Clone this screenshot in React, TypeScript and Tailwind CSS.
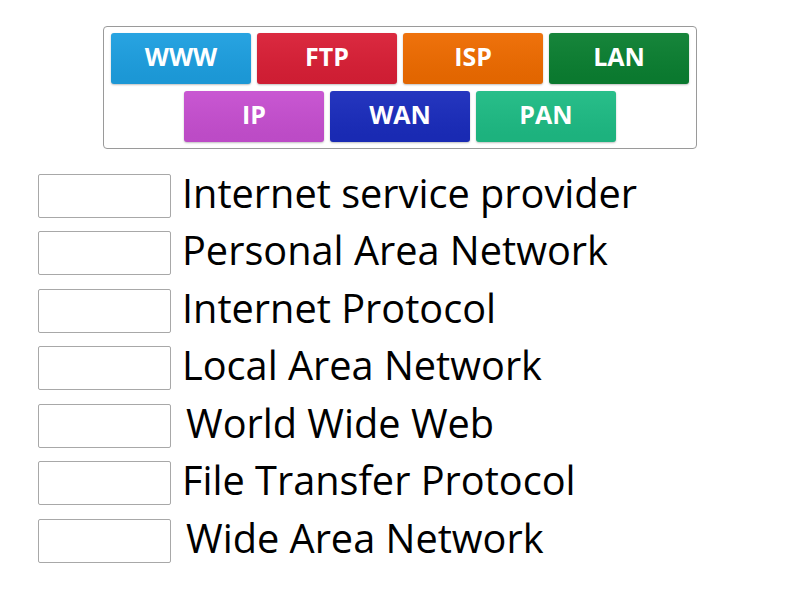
const tiles = [
  { label: 'WWW', color: 'bg-[#1d9fe0]' },
  { label: 'FTP', color: 'bg-[#d91f36]' },
  { label: 'ISP', color: 'bg-[#ee6b00]' },
  { label: 'LAN', color: 'bg-[#0b7f31]' },
  { label: 'IP', color: 'bg-[#c64fd0]' },
  { label: 'WAN', color: 'bg-[#1a2cbc]' },
  { label: 'PAN', color: 'bg-[#1ebb84]' },
]

const rows = [
  { text: 'Internet service provider', indent: 'pl-0' },
  { text: 'Personal Area Network', indent: 'pl-0' },
  { text: 'Internet Protocol', indent: 'pl-0' },
  { text: 'Local Area Network', indent: 'pl-0' },
  { text: 'World Wide Web', indent: 'pl-[4px]' },
  { text: 'File Transfer Protocol', indent: 'pl-0' },
  { text: 'Wide Area Network', indent: 'pl-[4px]' },
]

function Tile({ label, color }: { label: string; color: string }) {
  return (
    <div
      className={`${color} bg-linear-to-b from-white/5 to-black/5 w-[140px] h-[51px] rounded-[3px] flex items-center justify-center text-white font-bold text-[25px] leading-none pb-[5px] shadow-[0_1px_2px_rgba(0,0,0,0.25)]`}
    >
      {label}
    </div>
  )
}

export default function App() {
  return (
    <div className="w-[800px] h-[600px] bg-white font-['Open_Sans',sans-serif] text-black">
      {/* word bank */}
      <div className="pt-[26px] pl-[103px]">
        <div className="w-[594px] border border-[#9a9a9a] rounded-[4px] flex flex-col items-center py-[6px] gap-[7px]">
          <div className="flex gap-[6px]">
            {tiles.slice(0, 4).map(t => (
              <Tile key={t.label} {...t} />
            ))}
          </div>
          <div className="flex gap-[6px]">
            {tiles.slice(4).map(t => (
              <Tile key={t.label} {...t} />
            ))}
          </div>
        </div>
      </div>

      {/* answer rows */}
      <div className="pt-[25px] pl-[38px] flex flex-col">
        {rows.map((r, i) => (
          <div key={r.text} className={`${i % 2 === 0 ? 'h-[57px]' : 'h-[58px]'} flex items-start`}>
            <div className="w-[133px] h-[44px] border border-[#a8a8a8] rounded-[2px] bg-white shrink-0" />
            <div className={`ml-[11px] ${r.indent} text-[39.7px] leading-[38px] whitespace-nowrap`}>
              {r.text}
            </div>
          </div>
        ))}
      </div>
    </div>
  )
}
